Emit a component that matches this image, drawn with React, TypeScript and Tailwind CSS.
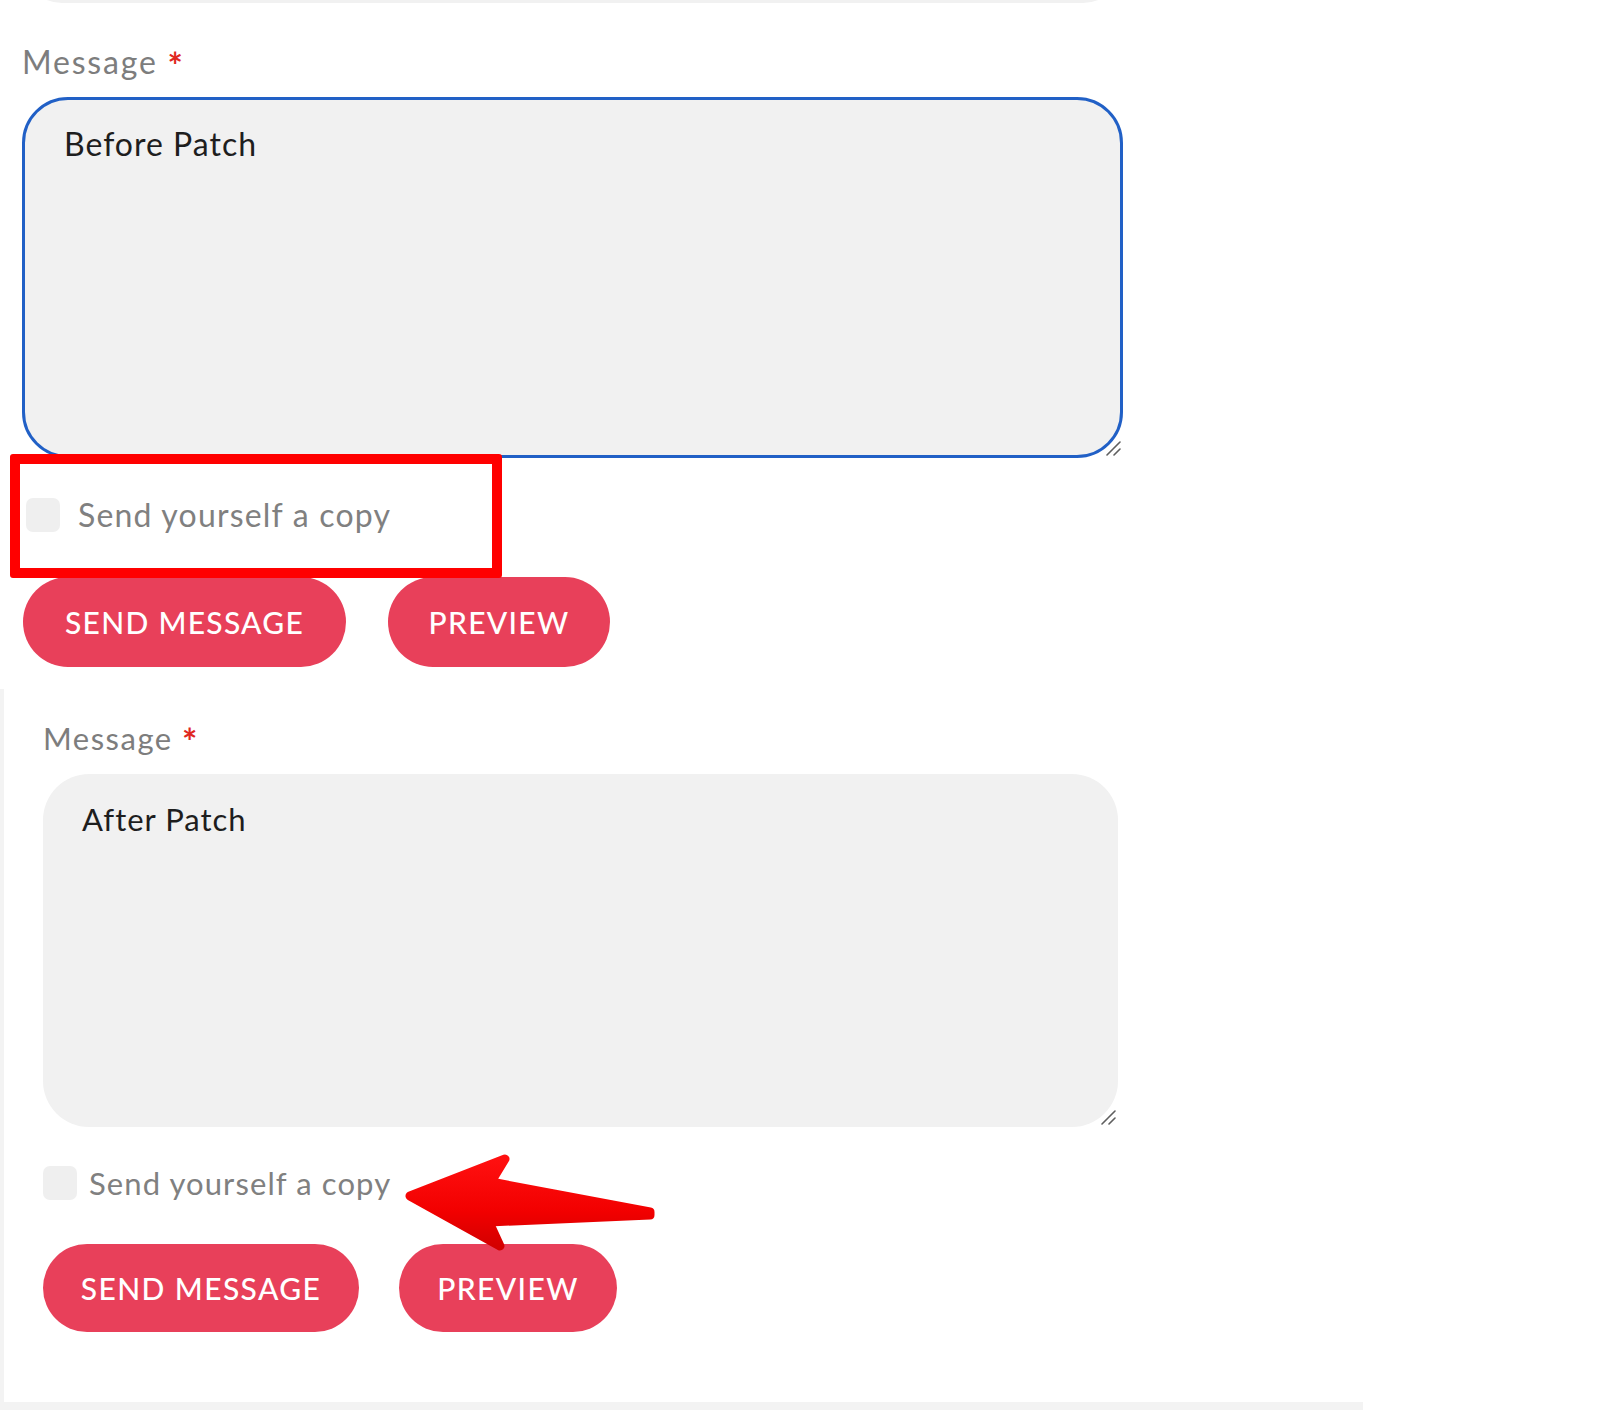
import type { ReactNode } from 'react'

function Checkbox() {
  return <div className="h-[34px] w-[34px] shrink-0 rounded-[7px] bg-[#efefef]" />
}

function ResizeGrip() {
  return (
    <svg
      className="pointer-events-none absolute bottom-[2px] right-[2px]"
      width="16"
      height="16"
      viewBox="0 0 16 16"
    >
      <path d="M15 2 L2 15 M15 9 L9 15" stroke="#5f5f5f" strokeWidth="1.6" strokeLinecap="round" />
    </svg>
  )
}

function PillButton({ children, className }: { children: ReactNode; className: string }) {
  return (
    <button
      type="button"
      className={`${className} rounded-full bg-[#e8405a] font-medium text-white`}
    >
      {children}
    </button>
  )
}

function Label({ size }: { size: string }) {
  return (
    <div className={`${size} h-[40px] leading-[40px] text-[#7d7d7d]`}>
      Message{' '}
      <span className="inline-block h-[40px] align-top text-[36px] font-bold leading-[46px] tracking-normal text-[#e0271f]">
        *
      </span>
    </div>
  )
}

function ArrowMark() {
  return (
    <svg
      className="absolute left-[398px] top-[459px]"
      width="264"
      height="108"
      viewBox="0 0 264 108"
    >
      <defs>
        <linearGradient id="arrowFill" x1="0" y1="0" x2="0" y2="1">
          <stop offset="0" stopColor="#ff1010" />
          <stop offset="0.6" stopColor="#f20000" />
          <stop offset="1" stopColor="#d40000" />
        </linearGradient>
      </defs>
      <path
        d="M8 48 L103 11 L89 34 L248 64 L248 67 L87 74 L98 98 Z"
        fill="url(#arrowFill)"
        stroke="url(#arrowFill)"
        strokeWidth="9"
        strokeLinejoin="round"
      />
    </svg>
  )
}

export default function App() {
  return (
    <div className="min-h-screen bg-white font-['Lato','Noto_Sans',sans-serif]">
      {/* Before patch */}
      <div className="relative w-[1123px] pl-[22px]">
        <div className="flex h-[3px] items-end overflow-hidden">
          <div className="h-[80px] w-full shrink-0 rounded-[46px] bg-[#f1f1f1]" />
        </div>
        <div className="mt-[39px]">
          <Label size="text-[32px] tracking-[1.8px]" />
        </div>
        <div className="relative mt-[15px] w-[1101px]">
          <textarea
            readOnly
            defaultValue="Before Patch"
            className="block h-[361px] w-full resize-none rounded-[46px] border-[3px] border-[#2160c6] bg-[#f1f1f1] pl-[39px] pt-[24px] text-[32px] leading-[40px] tracking-[1px] text-[#1e1e1e] outline-none"
          />
          <ResizeGrip />
        </div>
        <div className="mt-[37px] flex items-center gap-[18px] pl-[4px]">
          <Checkbox />
          <span className="text-[32px] leading-[40px] tracking-[1.2px] text-[#808080]">
            Send yourself a copy
          </span>
        </div>
        <div className="mt-[42px] flex gap-[42px] pl-[1px]">
          <PillButton className="h-[90px] w-[323px] text-[30px] tracking-[1.3px]">
            SEND MESSAGE
          </PillButton>
          <PillButton className="h-[90px] w-[222px] text-[30px] tracking-[1.3px]">
            PREVIEW
          </PillButton>
        </div>

        {/* annotation box */}
        <div className="absolute left-[10px] top-[454px] h-[124px] w-[492px] rounded-[3px] border-[10px] border-[#ff0000]" />
      </div>

      {/* After patch */}
      <div className="relative mt-[22px] w-[1363px] border-b-[8px] border-l-[4px] border-b-[#f3f3f3] border-l-[#f3f3f3] bg-white pb-[70px] pl-[39px] pt-[29px]">
        <Label size="text-[31px] tracking-[1.5px]" />
        <div className="relative mt-[16px] w-[1075px]">
          <textarea
            readOnly
            defaultValue="After Patch"
            className="block h-[353px] w-full resize-none rounded-[46px] bg-[#f1f1f1] pl-[39px] pt-[25px] text-[31px] leading-[40px] tracking-[1px] text-[#1e1e1e] outline-none"
          />
          <ResizeGrip />
        </div>
        <div className="mt-[36px] flex items-center gap-[12px]">
          <Checkbox />
          <span className="text-[31px] leading-[40px] tracking-[1.1px] text-[#808080]">
            Send yourself a copy
          </span>
        </div>
        <div className="mt-[41px] flex gap-[40px]">
          <PillButton className="h-[88px] w-[316px] text-[30px] tracking-[1.4px]">
            SEND MESSAGE
          </PillButton>
          <PillButton className="h-[88px] w-[218px] text-[30px] tracking-[1.4px]">
            PREVIEW
          </PillButton>
        </div>
        <ArrowMark />
      </div>
    </div>
  )
}
